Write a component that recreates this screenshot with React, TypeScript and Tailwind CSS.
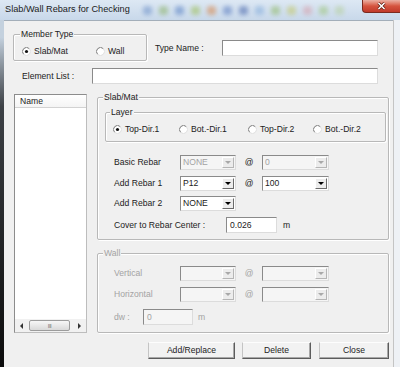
import clsx from 'clsx';
import type { ReactNode } from 'react';

const blobs = [
  '#6f92c9',
  '#8db36b',
  '#5b83c4',
  '#9fc05a',
  '#d7874c',
  '#5d7fc2',
  '#4a68ad',
  '#86aedb',
  '#93bb6c',
  '#c3c86a',
  '#d6a2ad',
  '#9fc67f',
  '#b6d0a0',
];

const Radio = ({ checked = false, label, disabled = false }: { checked?: boolean; label: string; disabled?: boolean }) => (
  <div className="flex items-center">
    <svg width="9" height="9" viewBox="0 0 9 9" className="shrink-0">
      <circle cx="4.5" cy="4.5" r="4" fill="#fff" />
      <path d="M1.67 7.33 A4 4 0 0 1 7.33 1.67" fill="none" stroke="#7a7a7a" strokeWidth="1" />
      <path d="M7.33 1.67 A4 4 0 0 1 1.67 7.33" fill="none" stroke="#dedede" strokeWidth="1" />
      {checked && <circle cx="4.5" cy="4.5" r="1.6" fill="#111" />}
    </svg>
    <span className={clsx('ml-[3px] whitespace-nowrap', disabled && 'text-[#a3a3a3]')}>{label}</span>
  </div>
);

const Combo = ({ className, value = '', disabled = false }: { className: string; value?: string; disabled?: boolean }) => (
  <div
    className={clsx(
      'flex h-[15px] items-stretch border border-t-[#8a8a8a] border-l-[#8a8a8a] border-r-[#dcdcdc] border-b-[#dcdcdc]',
      disabled ? 'bg-[#f5f5f5] text-[#a3a3a3]' : 'bg-white',
      className,
    )}
  >
    <span className="flex flex-1 items-center pl-[2px]">{value}</span>
    <div
      className={clsx(
        'my-px mr-px flex w-[12px] items-center justify-center border bg-[#ececec]',
        disabled
          ? 'border-t-white border-l-white border-r-[#b5b5b5] border-b-[#b5b5b5]'
          : 'border-t-white border-l-white border-r-[#6a6a6a] border-b-[#6a6a6a]',
      )}
    >
      <div
        className={clsx(
          'h-0 w-0 border-x-[3px] border-t-[3px] border-x-transparent',
          disabled ? 'border-t-[#a8a8a8]' : 'border-t-black',
        )}
      />
    </div>
  </div>
);

const TextBox = ({ className, value = '', disabled = false }: { className: string; value?: string; disabled?: boolean }) => (
  <div
    className={clsx(
      'flex h-[16px] items-center border border-t-[#8a8a8a] border-l-[#8a8a8a] border-r-[#dcdcdc] border-b-[#dcdcdc] pl-[3px]',
      disabled ? 'bg-[#f5f5f5] text-[#a3a3a3]' : 'bg-white',
      className,
    )}
  >
    {value}
  </div>
);

const Group = ({
  label,
  className,
  labelClass,
  disabled = false,
  children,
}: {
  label: string;
  className: string;
  labelClass: string;
  disabled?: boolean;
  children?: ReactNode;
}) => (
  <div className={clsx('relative flex flex-col rounded-[2px] border border-[#b8b8b8] shadow-[inset_1px_1px_0_#fff,1px_1px_0_#fff]', className)}>
    <span className={clsx('absolute top-[-6px] bg-[#f0f0f0] px-px leading-[10px]', labelClass, disabled && 'text-[#a3a3a3]')}>
      {label}
    </span>
    {children}
  </div>
);

const Button = ({ className, label }: { className: string; label: string }) => (
  <div
    className={clsx(
      'flex h-[17px] items-center justify-center border border-t-[#fdfdfd] border-l-[#c4c4c4] border-r-[#5c5c5c] border-b-[#5c5c5c] bg-[#f2f2f2] shadow-[inset_-1px_-1px_0_#a8a8a8]',
      className,
    )}
  >
    {label}
  </div>
);

const RebarRow = ({ label, first, second, disabled = false, className }: { label: string; first: string; second: string; disabled?: boolean; className: string }) => (
  <div className={clsx('ml-[16px] flex h-[15px] items-center', className)}>
    <span className="w-[66px]">{label}</span>
    <Combo className="w-[56px]" value={first} disabled={disabled} />
    <span className="w-[26px] text-center">@</span>
    <Combo className="w-[67px]" value={second} disabled={disabled} />
  </div>
);

export default function App() {
  return (
    <div className="flex h-[367px] w-[400px] flex-col overflow-hidden bg-[#f0f0f0] font-['Liberation_Sans',Arial,sans-serif] text-[8.6px] leading-none text-[#222]">
      {/* title bar */}
      <div className="relative flex h-[20px] shrink-0 items-center bg-linear-to-b from-[#dde8f4] to-[#c8d8ea] pl-[5px]">
        <span className="text-[9.2px] text-[#1b1b1b]">Slab/Wall Rebars for Checking</span>
        <div className="absolute top-[6px] left-[143px] flex gap-[7px] opacity-55">
          {blobs.map((c, i) => (
            <div key={i} className="h-[9px] w-[9px] rounded-[3px] blur-[2px]" style={{ backgroundColor: c }} />
          ))}
        </div>
        <div className="absolute top-0 right-0 flex h-[13px] w-[38px] items-center justify-center rounded-bl-[4px] border-b border-l border-[#7b2a1f] bg-linear-to-b from-[#eab0a4] via-[#d5543f] to-[#c0392a]">
          <svg width="9" height="8" viewBox="0 0 9 8">
            <path d="M1.5 1 L7.5 7 M7.5 1 L1.5 7" stroke="#5a1a10" strokeWidth="3" />
            <path d="M1.5 1 L7.5 7 M7.5 1 L1.5 7" stroke="#fff" strokeWidth="1.6" />
          </svg>
        </div>
      </div>

      <div className="flex flex-1">
        <div className="w-[4px] bg-linear-to-b from-[#c4d1de] from-5% via-[#3d4146] via-25% to-[#0c0c0c]" />

        <div className="flex w-[389px] flex-col border-t border-[#a3aeb9]">
          {/* member type row */}
          <div className="mt-[13px] flex items-start">
            <Group label="Member Type" className="ml-[9px] h-[27px] w-[134px]" labelClass="left-[6px]">
              <div className="mt-[12px] ml-[8px] flex h-[9px] items-center">
                <div className="w-[74px]">
                  <Radio checked label="Slab/Mat" />
                </div>
                <Radio label="Wall" />
              </div>
            </Group>
            <div className="mt-[6px] ml-[8px] flex h-[16px] items-center">
              <span className="w-[67px]">Type Name :</span>
              <TextBox className="w-[156px]" />
            </div>
          </div>

          {/* element list row */}
          <div className="mt-[7px] ml-[18px] flex h-[16px] items-center">
            <span className="w-[70px]">Element List :</span>
            <TextBox className="w-[286px]" />
          </div>

          {/* list + groups */}
          <div className="mt-[10px] flex items-start">
            <div className="ml-[10px] flex h-[239px] w-[73px] flex-col border border-t-[#8c8c8c] border-l-[#8c8c8c] border-r-[#bdbdbd] border-b-[#bdbdbd] bg-white">
              <div className="flex h-[13px] items-center border-b border-[#d2d2d2] bg-linear-to-b from-white to-[#f4f4f4] pl-[5px]">Name</div>
              <div className="flex-1" />
              <div className="flex h-[13px] items-center bg-[#f1f1f1]">
                <div className="flex w-[13px] justify-center">
                  <div className="h-0 w-0 border-y-[3px] border-r-[3px] border-y-transparent border-r-[#333]" />
                </div>
                <div className="ml-px flex h-[11px] w-[41px] items-center justify-center rounded-[2px] border border-[#9c9c9c] bg-linear-to-b from-[#f7f7f7] to-[#d9d9d9] text-[6px] tracking-[-0.5px] text-[#777]">
                  III
                </div>
                <div className="flex-1" />
                <div className="flex w-[13px] justify-center">
                  <div className="h-0 w-0 border-y-[3px] border-l-[3px] border-y-transparent border-l-[#333]" />
                </div>
              </div>
            </div>

            <div className="mt-[3px] ml-[10px] flex w-[292px] flex-col">
              <Group label="Slab/Mat" className="h-[143px]" labelClass="left-[5px]">
                <Group label="Layer" className="mt-[14px] ml-[7px] h-[30px] w-[281px]" labelClass="left-[4px]">
                  <div className="mt-[12px] ml-[7px] flex h-[9px] items-center">
                    <div className="w-[66px]">
                      <Radio checked label="Top-Dir.1" />
                    </div>
                    <div className="w-[69px]">
                      <Radio label="Bot.-Dir.1" />
                    </div>
                    <div className="w-[65px]">
                      <Radio label="Top-Dir.2" />
                    </div>
                    <Radio label="Bot.-Dir.2" />
                  </div>
                </Group>
                <RebarRow className="mt-[13px]" label="Basic Rebar" first="NONE" second="0" disabled />
                <RebarRow className="mt-[6px]" label="Add Rebar 1" first="P12" second="100" />
                <div className="mt-[5px] ml-[16px] flex h-[15px] items-center">
                  <span className="w-[66px]">Add Rebar 2</span>
                  <Combo className="w-[56px]" value="NONE" />
                </div>
                <div className="mt-[6px] ml-[16px] flex h-[16px] items-center">
                  <span className="w-[112px]">Cover to Rebar Center :</span>
                  <TextBox className="w-[51px]" value="0.026" />
                  <span className="ml-[6px]">m</span>
                </div>
              </Group>

              <Group label="Wall" className="mt-[13px] h-[80px] text-[#a3a3a3]" labelClass="left-[5px]" disabled>
                <RebarRow className="mt-[12px]" label="Vertical" first="" second="" disabled />
                <RebarRow className="mt-[6px]" label="Horizontal" first="" second="" disabled />
                <div className="mt-[7px] ml-[16px] flex h-[16px] items-center">
                  <span className="w-[29px]">dw :</span>
                  <TextBox className="w-[50px]" value="0" disabled />
                  <span className="ml-[5px]">m</span>
                </div>
              </Group>
            </div>
          </div>

          {/* buttons */}
          <div className="mt-[9px] flex">
            <Button className="ml-[144px] w-[87px]" label="Add/Replace" />
            <Button className="ml-[7px] w-[69px]" label="Delete" />
            <Button className="ml-[8px] w-[70px]" label="Close" />
          </div>
        </div>

        <div className="flex-1 border-l border-[#c4c4c4] bg-[#eef1f5]" />
      </div>
    </div>
  );
}
